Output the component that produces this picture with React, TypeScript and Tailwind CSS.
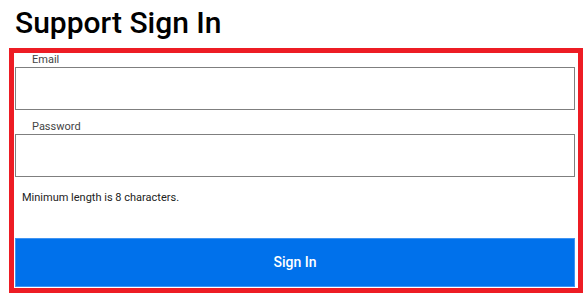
export default function App() {
  return (
    <div className="bg-white w-[586px] h-[300px] overflow-hidden font-['Roboto',sans-serif]">
      <h1 className="pl-[15px] pt-[5px] h-[48px] text-[30px] leading-[36px] font-medium text-black">
        Support Sign In
      </h1>

      <form
        className="ml-[9px] w-[574px] border-[5px] border-[#ed1c24] pl-px pr-[3px] pb-px"
        onSubmit={(e) => e.preventDefault()}
      >
        <label className="block">
          <span className="block h-[14px] pl-[17px] text-[11px] leading-[14px] text-[#444]">
            Email
          </span>
          <input
            type="email"
            className="block w-full h-[43px] border border-[#7f7f7f] bg-white outline-none"
          />
        </label>

        <label className="block mt-[10px]">
          <span className="block h-[14px] pl-[17px] text-[11px] leading-[14px] text-[#444]">
            Password
          </span>
          <input
            type="password"
            className="block w-full h-[43px] border border-[#7f7f7f] bg-white outline-none"
          />
        </label>

        <p className="mt-[14px] pl-[7px] text-[11px] leading-[14px] text-[#222]">
          Minimum length is 8 characters.
        </p>

        <button
          type="submit"
          className="mt-[33px] block w-full h-[49px] bg-[#0071eb] border border-[#3f93f2] text-white text-[14px] font-medium"
        >
          Sign In
        </button>
      </form>
    </div>
  );
}
